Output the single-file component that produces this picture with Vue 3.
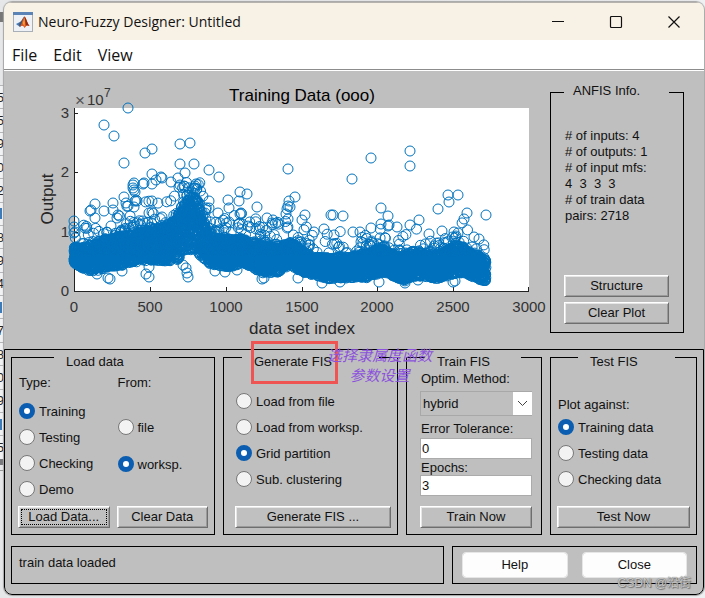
<script setup>
import { ref } from 'vue'

const dataType = ref('Training')
const dataFrom = ref('worksp.')
const fisMode = ref('Grid partition')
const plotAgainst = ref('Training data')
const method = ref('hybrid')
const tolerance = ref('0')
const epochs = ref('3')

const dataTypes = ['Training', 'Testing', 'Checking', 'Demo']
const dataSources = ['file', 'worksp.']
const fisModes = ['Load from file', 'Load from worksp.', 'Grid partition', 'Sub. clustering']
const plotTargets = ['Training data', 'Testing data', 'Checking data']
const info = ['# of inputs: 4', '# of outputs: 1', '# of input mfs:', '4  3  3  3', '# of train data', 'pairs: 2718']
const sheetRows = ['5', '5', '9', '0', '2', '', '8', '9', '4', '', '7', '8', '0', '9', '', '5']

const xTicks = [0, 500, 1000, 1500, 2000, 2500, 3000].map((v) => ({ v, x: Math.round(74 + (v * 455) / 3000) }))
const yTicks = [0, 1, 2, 3].map((v) => ({ v, y: Math.round(291 - v * 59.5) }))

// Samples that stand apart from the dense band
const outliers = [
  [128, 108], [104, 125], [114, 136], [124, 163], [145, 153], [152, 149], [180, 144], [190, 143], [180, 164],
  [194, 164], [209, 170], [219, 177], [152, 174], [161, 177], [162, 178], [156, 180], [171, 182], [178, 178],
  [185, 173], [134, 183], [133, 185], [144, 183], [143, 184], [152, 184], [134, 190], [133, 188], [135, 192],
  [124, 197], [113, 203], [95, 204], [91, 210], [136, 200], [135, 201], [152, 201], [209, 201], [228, 200],
  [240, 192], [247, 194], [257, 207], [239, 201], [196, 184], [195, 186], [184, 186], [180, 185], [179, 187],
  [74, 221], [74, 227], [74, 233], [75, 232], [85, 228], [95, 218], [90, 211], [104, 211], [118, 215], [117, 218],
  [128, 206], [126, 203], [149, 213], [152, 212], [162, 217], [209, 208], [218, 213], [229, 222], [229, 208],
  [241, 213], [240, 214], [267, 218], [273, 220], [272, 223], [256, 229], [113, 210], [134, 207], [137, 201],
  [110, 279], [108, 278], [149, 277], [146, 274], [149, 267], [186, 268], [187, 273], [188, 277], [183, 265],
  [262, 279], [264, 278], [215, 271], [225, 272], [237, 270], [97, 274], [122, 271],
  [288, 169], [371, 158], [352, 179], [410, 151], [410, 166], [295, 197], [289, 201], [288, 206], [287, 209],
  [290, 207], [286, 214], [288, 219], [381, 208], [438, 209], [448, 195], [458, 195], [449, 202], [388, 216],
  [381, 224], [389, 225], [388, 226], [397, 227], [410, 225], [419, 220], [467, 213], [464, 219], [486, 215],
  [442, 231], [429, 234], [474, 237], [479, 239], [331, 215], [333, 215], [343, 216], [305, 215], [302, 220],
  [324, 229], [314, 232], [334, 235], [353, 232], [360, 232], [371, 228], [322, 283], [340, 282], [379, 282],
  [418, 280], [405, 283], [453, 282], [455, 281], [298, 278], [454, 232], [458, 233], [456, 236],
]

// Envelope of the dense band: [x, top, bottom]
const envelope = [
  [74, 241, 268], [80, 243, 272], [90, 240, 276], [97, 238, 276], [110, 233, 272], [130, 228, 269],
  [150, 224, 265], [163, 222, 266], [177, 214, 266], [183, 198, 256], [190, 190, 255], [197, 194, 256],
  [203, 215, 264], [210, 232, 269], [230, 234, 273], [243, 234, 268], [263, 241, 278], [280, 241, 277],
  [290, 237, 270], [300, 243, 276], [313, 252, 280], [330, 253, 284], [347, 252, 283], [367, 248, 283],
  [380, 243, 278], [387, 246, 278], [397, 251, 283], [405, 249, 286], [413, 246, 282], [423, 248, 281],
  [437, 250, 284], [450, 243, 281], [457, 240, 278], [464, 243, 278], [473, 249, 282], [483, 253, 286],
  [487, 257, 285],
]

function band(x) {
  let i = 1
  while (i < envelope.length - 1 && envelope[i][0] < x) i++
  const [x0, t0, b0] = envelope[i - 1]
  const [x1, t1, b1] = envelope[i]
  const k = (x - x0) / (x1 - x0)
  return [t0 + (t1 - t0) * k + 5, b0 + (b1 - b0) * k - 5]
}

function buildMarkers() {
  let seed = 2718
  const rand = () => {
    seed = (seed * 1664525 + 1013904223) % 4294967296
    return seed / 4294967296
  }
  const pts = [...outliers]
  const count = 5400
  for (let i = 0; i < count; i++) {
    const x = 74 + (i * 412) / count
    const [top, bottom] = band(x)
    const y = rand() < 0.07 ? top + 2 + Math.log(1 - rand() * 0.94) * 11 : top + rand() * (bottom - top)
    pts.push([x, y])
  }
  return pts.map(([x, y]) => `M${(x - 5).toFixed(1)} ${y.toFixed(1)}a5 5 0 1 0 10 0a5 5 0 1 0-10 0`).join('')
}
const markers = buildMarkers()
</script>

<template>
  <div class="desktop">
    <div class="sheet" aria-hidden="true">
      <div class="sheet-top"></div>
      <div class="sheet-rows">
        <div v-for="(r, i) in sheetRows" :key="i" class="sheet-row" :class="{ link: !r }">{{ r }}</div>
      </div>
      <div class="sheet-end"></div>
    </div>

    <main class="window">
      <header class="titlebar">
        <svg class="app-icon" viewBox="0 0 20 20">
          <rect x="0.5" y="0.5" width="19" height="19" fill="#eef1f5" stroke="#a9afb8" />
          <rect x="0" y="0" width="20" height="3" fill="#5b83b5" />
          <path d="M3 12l4-2 2 2-2 3z" fill="#3f78b5" />
          <path d="M7 10c2-1 3-5 4.500-5.500L9 12l-2 3-1-2z" fill="#45556f" />
          <path d="M7 14.500c2-2 2.500-8 4.500-10 1.500 1 2.500 6 5 9.500-2-1-3-1-5 2-1-2-2-3-4.500-1.500z" fill="#d9541e" />
          <path d="M11.500 4.500c1.500 1 2.500 6 5 9.500-2-1-3-1-3.500-.5-.5-3-1-6-1.500-9z" fill="#8d2a17" />
          <path d="M9.500 11c1-1.500 1.300-4 2-5 .5 3 .5 6 0 9-.6-1.500-1-2.500-2-4z" fill="#f2a03d" />
        </svg>
        <h1>Neuro-Fuzzy Designer: Untitled</h1>
        <div class="caption">
          <button type="button" aria-label="Minimize">
            <svg viewBox="0 0 14 14"><path d="M1 6.500h12" /></svg>
          </button>
          <button type="button" aria-label="Maximize">
            <svg viewBox="0 0 14 14"><rect x="1.500" y="1.500" width="11" height="11" rx="1" /></svg>
          </button>
          <button type="button" aria-label="Close window">
            <svg viewBox="0 0 14 14"><path d="M1.500 1.500l11 11M12.500 1.500l-11 11" /></svg>
          </button>
        </div>
      </header>

      <nav class="menubar">
        <button type="button">File</button>
        <button type="button">Edit</button>
        <button type="button">View</button>
      </nav>

      <section class="upper">
        <svg class="chart" viewBox="4 71 546 278" role="img" aria-label="Training Data">
          <rect x="74" y="108" width="455" height="183" fill="#fff" />
          <path class="axis" d="M74.500 108v183.500H529" />
          <path v-for="t in xTicks" :key="'x' + t.v" class="axis" :d="`M${t.x + (t.v === 3000 ? -0.5 : 0.5)} 291v-4`" />
          <path v-for="t in yTicks" :key="'y' + t.v" class="axis" :d="`M74 ${t.y + 0.5}h4`" />
          <path class="markers" :d="markers" />
          <text v-for="t in xTicks" :key="'xl' + t.v" class="tick" :x="t.x" y="312" text-anchor="middle">{{ t.v }}</text>
          <text v-for="t in yTicks" :key="'yl' + t.v" class="tick" x="69" :y="t.y + 5" text-anchor="end">{{ t.v }}</text>
          <text class="times" x="75" y="106">×</text>
          <text class="tick" x="87" y="105">10</text>
          <text class="power" x="104" y="97">7</text>
          <text class="heading" x="302" y="101" text-anchor="middle">Training Data (ooo)</text>
          <text class="label" x="302" y="334" text-anchor="middle">data set index</text>
          <text class="label" transform="translate(53 199) rotate(-90)" text-anchor="middle">Output</text>
        </svg>

        <fieldset class="anfis">
          <legend>ANFIS Info.</legend>
          <div class="anfis-body">
            <p v-for="line in info" :key="line">{{ line }}</p>
            <div class="stack">
              <button class="raised" type="button">Structure</button>
              <button class="raised" type="button">Clear Plot</button>
            </div>
          </div>
        </fieldset>
      </section>

      <section class="lower">
        <div class="panels">
          <fieldset class="load">
            <legend>Load data</legend>
            <div class="panel-body load-body">
              <div class="col">
                <p>Type:</p>
                <div class="radios">
                  <label v-for="o in dataTypes" :key="o"><input v-model="dataType" type="radio" name="type" :value="o" />{{ o }}</label>
                </div>
                <button class="raised focused" type="button"><span>Load Data...</span></button>
              </div>
              <div class="col">
                <p>From:</p>
                <div class="radios sources">
                  <label v-for="o in dataSources" :key="o"><input v-model="dataFrom" type="radio" name="from" :value="o" />{{ o }}</label>
                </div>
                <button class="raised" type="button">Clear Data</button>
              </div>
            </div>
          </fieldset>

          <fieldset class="generate">
            <legend>Generate FIS</legend>
            <div class="panel-body">
              <div class="radios">
                <label v-for="o in fisModes" :key="o"><input v-model="fisMode" type="radio" name="fis" :value="o" />{{ o }}</label>
              </div>
              <button class="raised" type="button">Generate FIS ...</button>
            </div>
            <div class="mark-box"></div>
            <div class="note">选择隶属度函数<br />参数设置</div>
          </fieldset>

          <fieldset class="train">
            <legend>Train FIS</legend>
            <div class="panel-body">
              <label for="method">Optim. Method:</label>
              <div class="select">
                <select id="method" v-model="method">
                  <option>hybrid</option>
                  <option>backpropa</option>
                </select>
                <svg viewBox="0 0 19 23"><path d="M5 9l4.500 4.500L14 9" /></svg>
              </div>
              <label for="tolerance">Error Tolerance:</label>
              <input id="tolerance" v-model="tolerance" type="text" />
              <label for="epochs">Epochs:</label>
              <input id="epochs" v-model="epochs" type="text" />
              <button class="raised" type="button">Train Now</button>
            </div>
          </fieldset>

          <fieldset class="test">
            <legend>Test FIS</legend>
            <div class="panel-body">
              <p>Plot against:</p>
              <div class="radios">
                <label v-for="o in plotTargets" :key="o"><input v-model="plotAgainst" type="radio" name="plot" :value="o" />{{ o }}</label>
              </div>
              <button class="raised" type="button">Test Now</button>
            </div>
          </fieldset>
        </div>

        <div class="footer">
          <div class="status" role="status">train data loaded</div>
          <div class="actions">
            <button type="button">Help</button>
            <button type="button">Close</button>
          </div>
        </div>
      </section>
    </main>
    <div class="watermark">CSDN @沿街</div>
  </div>
</template>

<style>
body {
  margin: 0;
  background: #e6e7e9;
}
</style>

<style scoped>
.desktop {
  position: relative;
  display: flex;
  padding: 2px 1px 3px 0;
  overflow: hidden;
  font: 13px/15px 'Liberation Sans', Arial, sans-serif;
  color: #111;
  background: linear-gradient(90deg, #e6e7e9, #eef0f2);
}
.desktop *,
.desktop *::before {
  box-sizing: border-box;
}
p,
h1 {
  margin: 0;
  font-weight: normal;
}
button,
input,
select {
  margin: 0;
  font: inherit;
  color: inherit;
}

.sheet {
  display: flex;
  flex-direction: column;
  width: 4px;
  overflow: hidden;
}
.sheet-top {
  height: 83px;
  background: linear-gradient(#e6e7e9 10px, #777 10px, #777 20px, #e6e7e9 20px);
}
.sheet-rows {
  display: grid;
  grid-template-columns: 100%;
  grid-auto-rows: 1fr;
  height: 63%;
}
.sheet-row {
  display: flex;
  align-items: center;
  justify-content: flex-end;
  border-top: 1px solid #b4b6b9;
  background: #f1f2f4;
  color: #222;
}
.sheet-row.link::before {
  content: '';
  flex: none;
  width: 2px;
  height: 11px;
  margin-right: 2px;
  background: #3c7ab8;
}
.sheet-end {
  height: 12px;
  border-top: 6px solid #77797c;
  border-bottom: 1px solid #999;
}

.window {
  flex: 1;
  min-width: 0;
  overflow: hidden;
  border-radius: 8px;
  background: #bfbfbf;
  box-shadow: 0 0 1px 1px #a5a5a5;
}
.titlebar {
  display: flex;
  align-items: center;
  height: 38px;
  padding-left: 9px;
  border-top: 1px solid #b5b2ae;
  background: #f8f1e6;
  font: 14px/20px 'Open Sans', 'Noto Sans', sans-serif;
}
.titlebar h1 {
  flex: 1;
  margin-left: 5px;
  font: inherit;
  white-space: nowrap;
}
.app-icon {
  width: 20px;
  height: 20px;
}
.caption {
  display: flex;
  padding-right: 1px;
}
.caption button {
  display: grid;
  place-items: center;
  width: 58px;
  height: 36px;
  padding: 0;
  border: 0;
  background: none;
}
.caption svg {
  width: 14px;
  height: 14px;
  fill: none;
  stroke: #111;
  stroke-width: 1.2;
}
.menubar {
  display: flex;
  gap: 16px;
  height: 31px;
  padding: 0 8px;
  border-bottom: 1px solid #fff;
  background: #fff;
  box-shadow: inset 0 -1px #8c8c8c;
}
.menubar button {
  padding: 0;
  border: 0;
  background: none;
  font: 16px/28px 'Open Sans', 'Noto Sans', sans-serif;
}

.upper {
  display: flex;
  align-items: flex-start;
  padding-right: 20px;
}
.chart {
  flex: 1;
  min-width: 0;
  display: block;
}
.axis {
  fill: none;
  stroke: #222;
}
.markers {
  fill: none;
  stroke: #0072bd;
  stroke-width: 1;
}
.tick {
  font-size: 15px;
  fill: #333;
}
.times {
  font-size: 17px;
  fill: #555;
}
.power {
  font-size: 12px;
  fill: #333;
}
.heading {
  font-size: 17px;
  fill: #000;
}
.label {
  font-size: 17px;
  fill: #262626;
}

fieldset {
  position: relative;
  min-width: 0;
  margin: 0;
  padding: 0;
  border: 1px solid #000;
}
legend {
  height: 15px;
  padding: 4px 0 0 12px;
  white-space: nowrap;
}
.anfis {
  flex: none;
  width: 134px;
  margin: 14px 0 16px;
}
.anfis legend {
  width: 105px;
  margin-left: 13px;
  padding: 0 0 0 9px;
  line-height: 11px;
}
.anfis-body {
  padding: 28px 14px 8px 13px;
  line-height: 16px;
  white-space: pre;
}
.anfis-body p {
  padding-left: 1px;
}
.stack {
  display: grid;
  gap: 5px;
  margin-top: 51px;
}

.raised {
  display: block;
  width: 100%;
  height: 22px;
  padding: 0;
  border: 1px solid;
  border-color: #fff #6e6e6e #6e6e6e #fff;
  background: #c0c0c0;
  box-shadow: inset 1px 1px #e6e6e6, inset -1px -1px #9a9a9a;
  line-height: 18px;
  text-align: center;
  white-space: nowrap;
}
.focused {
  padding: 2px;
}
.focused span {
  display: block;
  border: 1px dotted #000;
  line-height: 14px;
}

.lower {
  padding: 0 6px 10px;
  border: 1px solid #000;
  border-radius: 0 0 8px 8px;
}
.panels {
  display: grid;
  grid-template-columns: 204fr 175fr 136fr 147fr;
  gap: 8px;
}
.load legend {
  width: 52%;
  margin-left: 42px;
}
.generate legend {
  width: 79%;
  margin-left: 18px;
}
.train legend {
  width: 72%;
  margin-left: 18px;
}
.test legend {
  width: 67%;
  margin-left: 27px;
}
.load-body {
  display: grid;
  grid-template-columns: 1fr 1fr;
  gap: 7px;
  padding: 10px 6px 6px;
}
.load p {
  padding-left: 1px;
  line-height: 16px;
}
.radios {
  padding-left: 1px;
}
.radios label {
  display: flex;
  align-items: center;
  gap: 4px;
  height: 26px;
  white-space: nowrap;
}
.radios input {
  appearance: none;
  flex: none;
  width: 16px;
  height: 16px;
  border: 1px solid #777;
  border-radius: 50%;
  background: #f3f3f3;
}
.radios input:checked {
  border: 5px solid #0a5db0;
  background: #fff;
}
.load .radios {
  height: 104px;
  margin: 7px 0 4px;
}
.load .sources {
  display: grid;
  align-content: start;
  gap: 11px;
  padding-top: 16px;
}
.generate .panel-body {
  padding: 23px 6px 6px 11px;
}
.generate .raised,
.test .raised {
  margin-top: 14px;
}
.train .panel-body {
  display: flex;
  flex-direction: column;
  padding: 6px 9px 6px 13px;
}
.train label {
  padding-left: 1px;
  white-space: nowrap;
}
.select {
  position: relative;
  margin: 5px 0;
}
.select select {
  display: block;
  appearance: none;
  width: 100%;
  height: 25px;
  padding: 0 20px 0 2px;
  border: 1px solid #a8a8a8;
  border-radius: 0;
  background: #bfbfbf;
}
.select svg {
  position: absolute;
  top: 1px;
  right: 0;
  width: 19px;
  height: 23px;
  background: #fff;
  fill: none;
  stroke: #444;
  pointer-events: none;
}
.train input {
  width: 100%;
  height: 21px;
  padding: 0 1px;
  border: 1px solid #ababab;
  background: #fff;
}
#tolerance {
  margin: 2px 0 1px;
}
.train .raised {
  margin-top: 10px;
}
.test .panel-body {
  padding: 32px 6px 6px;
}
.test p {
  padding: 0 0 2px 1px;
}

.mark-box {
  position: absolute;
  top: -24px;
  left: 27px;
  width: 87px;
  height: 43px;
  border: 3px solid #f05452;
}
.note {
  position: absolute;
  z-index: 1;
  top: -20px;
  left: 103px;
  font: italic 15px/20px 'Noto Sans CJK SC', sans-serif;
  color: #8c52dc;
  text-align: center;
  white-space: nowrap;
}

.footer {
  display: grid;
  grid-template-columns: 433fr 245fr;
  gap: 8px;
  margin-top: 11px;
}
.status,
.actions {
  height: 38px;
  border: 1px solid #000;
}
.status {
  padding-left: 7px;
  line-height: 32px;
}
.actions {
  display: grid;
  grid-template-columns: 1fr 1fr;
  gap: 14px;
  padding: 5px 9px;
}
.actions button {
  padding: 0;
  border: 1px solid #d5d5d5;
  border-radius: 4px;
  background: #fdfdfd;
  outline: 1px solid #e6e6e6;
  outline-offset: -1px;
  line-height: 22px;
}
.watermark {
  position: absolute;
  right: 14px;
  bottom: 6px;
  font: 12px/18px 'Liberation Sans', 'Noto Sans CJK SC', sans-serif;
  color: #c9c9c9;
  text-shadow: 0 0 1px #555, 1px 1px 1px #777;
}
</style>
